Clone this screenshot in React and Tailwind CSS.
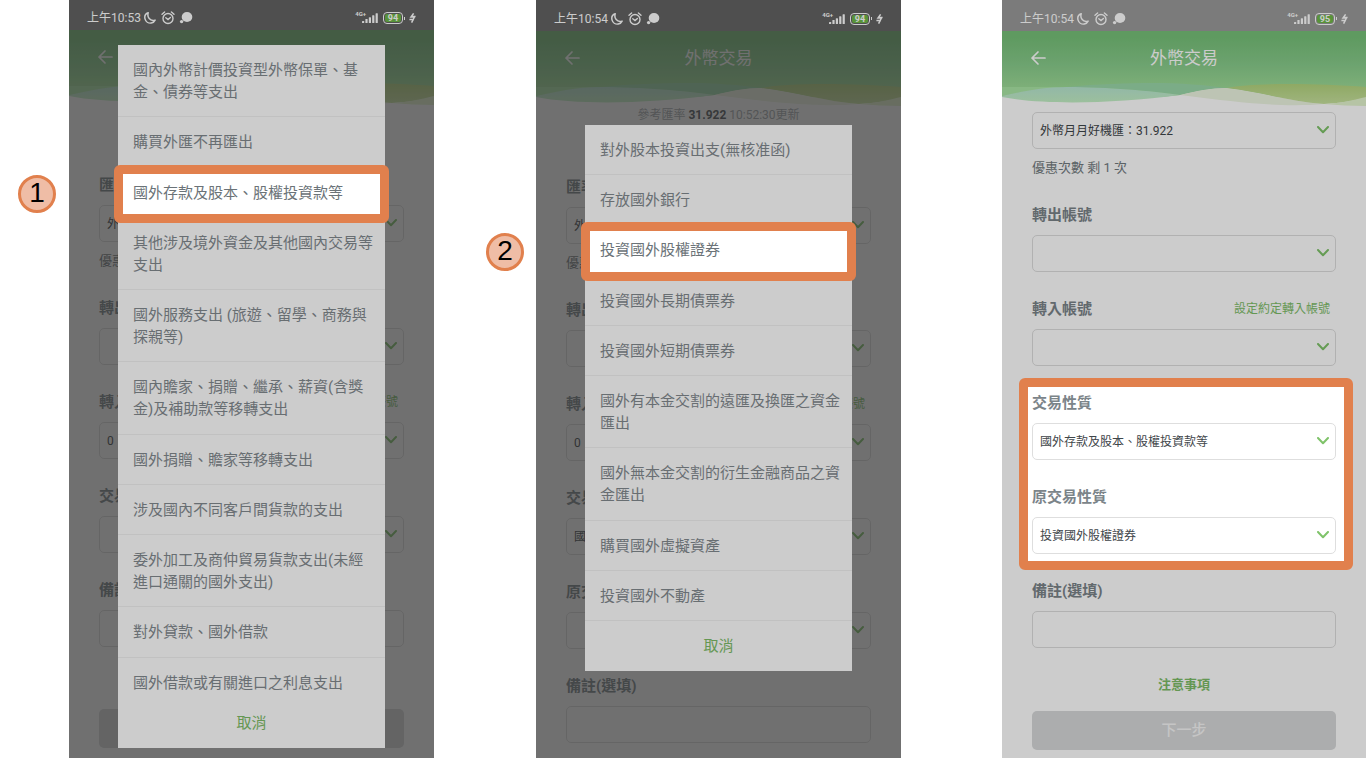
import React, { useId } from 'react';

const remitTypes = [
  '國內外幣計價投資型外幣保單、基金、債券等支出',
  '購買外匯不再匯出',
  '國外存款及股本、股權投資款等',
  '其他涉及境外資金及其他國內交易等支出',
  '國外服務支出 (旅遊、留學、商務與探親等)',
  '國內贍家、捐贈、繼承、薪資(含獎金)及補助款等移轉支出',
  '國外捐贈、贍家等移轉支出',
  '涉及國內不同客戶間貨款的支出',
  '委外加工及商仲貿易貨款支出(未經進口通關的國外支出)',
  '對外貸款、國外借款',
  '國外借款或有關進口之利息支出',
];

const investTypes = [
  '對外股本投資出支(無核准函)',
  '存放國外銀行',
  '投資國外股權證券',
  '投資國外長期債票券',
  '投資國外短期債票券',
  '國外有本金交割的遠匯及換匯之資金匯出',
  '國外無本金交割的衍生金融商品之資金匯出',
  '購買國外虛擬資產',
  '投資國外不動產',
];

const StatusBar = ({ time, battery, className }) => (
  <div className={`flex items-center justify-between pl-[18px] pr-[18px] pt-[6px] text-white ${className}`}>
    <div className="flex items-center gap-1">
      <span className="text-[12px] leading-4">上午{time}</span>
      <svg className="-ml-px h-3 w-3" viewBox="0 0 12 12" fill="none" stroke="currentColor" strokeWidth="1.5" strokeLinejoin="round">
        <path d="M4.2 0.8C1.6 1.7 0.4 4.3 1 6.9c0.7 2.8 3.4 4.6 6.2 4.1 1.8-0.3 3.2-1.4 3.9-2.9-2.2 0.7-4.5 0.2-5.9-1.5C3.9 5 3.6 2.7 4.2 0.8z" />
      </svg>
      <svg className="ml-px h-[14px] w-[14px]" viewBox="0 0 14 14" fill="none" stroke="currentColor" strokeWidth="1.4" strokeLinecap="round">
        <circle cx="7" cy="7.5" r="5" />
        <path d="M1 3.2L3.6 1M13 3.2L10.4 1M4.8 6.8L7 8.6L9.4 6.4" />
      </svg>
      <svg className="h-[14px] w-[14px]" viewBox="0 0 14 14" fill="currentColor">
        <ellipse cx="8" cy="6" rx="5.3" ry="5" />
        <circle cx="2.6" cy="10.6" r="1.7" />
      </svg>
    </div>
    <div className="flex items-center">
      <span className="-mr-1 -mt-2 text-[6px] font-bold leading-[6px]">4G+</span>
      <svg className="h-[10px] w-4" viewBox="0 0 16 10" fill="currentColor">
        <rect x="0" y="8" width="2.2" height="2" rx="0.5" />
        <rect x="3.4" y="6" width="2.2" height="4" rx="0.5" />
        <rect x="6.8" y="4.2" width="2.2" height="5.8" rx="0.5" />
        <rect x="10.2" y="2.2" width="2.2" height="7.8" rx="0.5" />
        <rect x="13.6" y="0.2" width="2.2" height="9.8" rx="0.5" />
      </svg>
      <span className="ml-[5px] rounded-[4px] border border-white p-px">
        <span className="block w-4 rounded-[2px] bg-[#6fb848] text-center text-[9px] font-bold leading-[8px]">{battery}</span>
      </span>
      <span className="ml-px h-[3px] w-px bg-white" />
      <svg className="ml-1 h-[10px] w-[7px]" viewBox="0 0 7 10" fill="none" stroke="currentColor" strokeWidth="1.5">
        <path d="M4.6 0.4L2 4H5.4L2.6 9.6M0.4 6.4H5M2 3.6H6.6" />
      </svg>
    </div>
  </div>
);

const Header = () => {
  const id = useId();

  return (
    <header className="relative h-[75px] text-white">
      <svg className="absolute inset-0 h-full w-full" viewBox="0 0 364 75" preserveAspectRatio="none">
        <defs>
          <linearGradient id={id} gradientUnits="userSpaceOnUse" x1="0" y1="0" x2="0" y2="66">
            <stop offset="0.1" stopColor="#77c179" />
            <stop offset="0.5" stopColor="#88cc8b" />
            <stop offset="1" stopColor="#a6e29c" />
          </linearGradient>
          <linearGradient id={`${id}-teal`} x1="0" y1="0" x2="0" y2="1">
            <stop offset="0" stopColor="#b8e6d2" />
            <stop offset="1" stopColor="#c3f0c4" />
          </linearGradient>
          <linearGradient id={`${id}-lime`} x1="0" y1="0" x2="0" y2="1">
            <stop offset="0" stopColor="#b3d47d" />
            <stop offset="1" stopColor="#c8e29f" />
          </linearGradient>
        </defs>
        <path d="M0 0H364V66H0z" fill={`url(#${id})`} />
        {/* page colour under the waves */}
        <path d="M0 66C40 74 110 72 178 64C195 60 208 57 225 57C265 62 295 73 325 73L364 66V75H0z" fill="#fff" />
        <path d="M0 56H65C40 58 18 61 0 65z" fill="#abe6a5" />
        <path d="M65 56C95 53 125 52 150 52C180 52 203 54 225 57C208 57 195 60 178 64C150 60 105 56 65 56z" fill="#9ad8a9" />
        <path d="M0 65C18 61 40 56 65 56C105 56 150 60 178 64C110 73 40 74 0 66z" fill={`url(#${id}-teal)`} />
        <path d="M178 64C195 60 208 57 225 57C260 61 290 71 322 73C300 75 275 74 262 73C230 71 205 67 178 64z" fill="#edf5e2" />
        <path d="M225 57C250 52 310 52 364 56V67C350 70 340 72 322 73C290 71 260 61 225 57z" fill={`url(#${id}-lime)`} />
        <path d="M364 66V75C350 75 335 74 322 73C340 72 352 69 364 66z" fill="#e4f5cf" />
      </svg>
      <div className="relative grid h-[53px] grid-cols-[1fr_auto_1fr] items-center px-[28px]">
        <button type="button" aria-label="返回" className="justify-self-start">
          <svg className="h-4 w-4" viewBox="0 0 16 16" fill="none" stroke="currentColor" strokeWidth="1.7" strokeLinecap="round" strokeLinejoin="round">
            <path d="M8 2L2 8L8 14M2 8H15" />
          </svg>
        </button>
        <h1 className="text-[17px] leading-6">外幣交易</h1>
      </div>
    </header>
  );
};

const Field = ({ label, value = '', link, hideLabel, text }) => {
  const id = useId();
  const box = 'h-[37px] w-full appearance-none rounded-[5px] border border-[#dedede] bg-white px-[7px] text-[12px] text-[#3f464a]';

  return (
    <div>
      {!hideLabel && (
        <div className="mb-[9px] flex items-center justify-between pr-[6px]">
          <label htmlFor={id} className="text-[15px] font-bold leading-[22px] text-[#7b8489]">{label}</label>
          {link && <a href="#" className="text-[12px] leading-[22px] text-[#7dbd68]">{link}</a>}
        </div>
      )}
      {text ? (
        <input id={id} type="text" className={box} />
      ) : (
        <div className="relative">
          <select id={id} aria-label={label} className={box}>
            <option>{value}</option>
          </select>
          <svg className="pointer-events-none absolute right-[7px] top-[14px] h-2 w-3" viewBox="0 0 12 8" fill="none" stroke="#7fc36a" strokeWidth="2" strokeLinecap="round" strokeLinejoin="round">
            <path d="M1 1L6 6.2L11 1" />
          </svg>
        </div>
      )}
    </div>
  );
};

const RateField = ({ hideLabel }) => (
  <div>
    <Field label="匯率" value="外幣月月好機匯：31.922" hideLabel={hideLabel} />
    <p className="mt-[9px] text-[13px] leading-5 text-[#737b80]">優惠次數 剩 1 次</p>
  </div>
);

const NextButton = ({ children }) => (
  <button type="button" aria-label="下一步" className="h-[39px] w-full rounded-[5px] bg-[#d7d9da] text-[15px] font-medium text-[#f7f7f7]">
    {children}
  </button>
);

const Dialog = ({ items, active, className, listClass }) => (
  <div className={`absolute inset-x-0 top-0 px-[49px] ${className}`}>
    <div role="dialog" aria-label="選擇交易性質" className="flex h-full flex-col bg-white">
      <ul className={`flex grow flex-col ${listClass}`}>
        {items.map((item) => (
          <li key={item} className={`grow border-b border-[#f2f2f2] ${item === active ? 'relative z-20' : ''}`}>
            {item === active && (
              <span className="absolute -inset-x-1 -bottom-[6px] -top-[3px] rounded-md border-[9px] border-[#e1804d] bg-white" />
            )}
            <button
              type="button"
              className={`relative w-full pb-[13px] pl-[15px] pr-2 pt-[14px] text-left text-[15px] leading-[22px] ${item === active ? 'text-[#6b7378]' : 'text-[#838a8f]'}`}
            >
              {item}
            </button>
          </li>
        ))}
      </ul>
      <button type="button" className="h-[50px] text-[15px] text-[#7dbd68]">取消</button>
    </div>
  </div>
);

const Phone = ({ time, battery, statusClass, dialog, children }) => (
  <section className="relative isolate flex min-w-0 flex-col bg-white">
    <StatusBar time={time} battery={battery} className={statusClass} />
    <div className="relative grow">
      <Header />
      {children}
      {dialog && <div className="absolute inset-0 bg-[#3d3d3d]/59" />}
    </div>
    {dialog}
    {/* dims everything except the highlighted step */}
    <div className="pointer-events-none absolute inset-0 z-10 bg-black/20" />
  </section>
);

const Step = ({ number, className }) => (
  <div className={`flex justify-end ${className}`}>
    <span className="flex h-[38px] w-[38px] items-center justify-center rounded-full border-[3px] border-[#e1804d] bg-[#efbda6] pb-[3px] font-['Liberation_Sans',sans-serif] text-[28px] leading-7 text-black">
      {number}
    </span>
  </div>
);

const App = () => {
  return (
    <main className="grid min-h-screen grid-cols-[69fr_365fr_102fr_365fr_101fr_364fr] overflow-hidden bg-white font-[Roboto,'Noto_Sans_CJK_TC',sans-serif]">
      <Step number={1} className="pr-[13px] pt-[175px]" />

      <Phone
        time="10:53"
        battery={94}
        statusClass="h-[30px] bg-[#636363]"
        dialog={
          <Dialog
            items={remitTypes}
            active="國外存款及股本、股權投資款等"
            className="h-[748px] pt-[45px]"
            listClass="[&>li:last-child]:border-0 [&>li:last-child>button]:pb-1"
          />
        }
      >
        <form className="flex flex-col gap-[26px] px-[30px] pt-[69px]">
          <RateField />
          <Field label="轉出帳號" />
          <Field label="轉入帳號" value="0" link="設定約定轉入帳號" />
          <Field label="交易性質" />
          <Field label="備註(選填)" text />
          <div className="pt-9">
            <NextButton />
          </div>
        </form>
      </Phone>

      <Step number={2} className="pr-3 pt-[233px]" />

      <Phone
        time="10:54"
        battery={94}
        statusClass="h-[31px] bg-[#636363]"
        dialog={
          <Dialog
            items={investTypes}
            active="投資國外股權證券"
            className="h-[671px] pt-[125px]"
            listClass=""
          />
        }
      >
        <p className="mb-[52px] text-center text-[12px] leading-[18px] text-[#a5abae]">
          參考匯率 <b className="text-[#50565a]">31.922</b> 10:52:30更新
        </p>
        <form className="flex flex-col gap-[26px] px-[30px]">
          <RateField />
          <Field label="轉出帳號" />
          <Field label="轉入帳號" value="0" link="設定約定轉入帳號" />
          <Field label="交易性質" value="國外存款及股本、股權投資款等" />
          <Field label="原交易性質" />
          <Field label="備註(選填)" text />
        </form>
      </Phone>

      <div />

      <Phone time="10:54" battery={95} statusClass="h-[31px] bg-[#9a9a9a]">
        <form className="flex flex-col gap-[26px] px-[30px] pt-[6px]">
          <RateField hideLabel />
          <Field label="轉出帳號" />
          <Field label="轉入帳號" link="設定約定轉入帳號" />
          <div className="relative z-20 -mb-4 -ml-[13px] -mr-[17px] -mt-[14px] flex flex-col gap-[26px] rounded-md border-[9px] border-[#e1804d] bg-white pb-[7px] pl-1 pr-2 pt-[5px]">
            <Field label="交易性質" value="國外存款及股本、股權投資款等" />
            <Field label="原交易性質" value="投資國外股權證券" />
          </div>
          <Field label="備註(選填)" text />
          <div className="flex flex-col items-center gap-4 pt-px">
            <a href="#" className="text-[13px] font-bold leading-5 text-[#7dbd68]">注意事項</a>
            <NextButton>下一步</NextButton>
          </div>
        </form>
      </Phone>
    </main>
  );
};

export default App;
